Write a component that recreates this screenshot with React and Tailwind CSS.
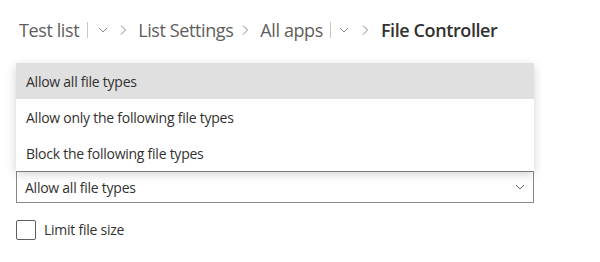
import React from "react";

const Chevron = ({ className }) => (
  <svg viewBox="0 0 12 12" className={className} fill="none" stroke="currentColor" strokeWidth="1">
    <path d="M2 4 L6 8 L10 4" />
  </svg>
);
const Right = ({ className }) => (
  <svg viewBox="0 0 12 12" className={className} fill="none" stroke="currentColor" strokeWidth="1">
    <path d="M4 1.5 L8.5 6 L4 10.5" />
  </svg>
);

export default function App() {
  return (
    <div className="w-[600px] h-[262px] bg-white px-4 text-[#323130]" style={{ fontFamily: '"Open Sans", "Noto Sans", sans-serif' }}>
      <div className="h-[46px] pt-[14px] flex items-center text-[18px] tracking-[-0.4px] text-[#605e5c] pl-[3px]">
        <span>Test list</span>
        <span className="ml-[8px] w-px h-[16px] bg-[#c8c6c4]" />
        <Chevron className="ml-[9px] w-[12px] h-[12px] text-[#8a8886]" />
        <Right className="ml-[8px] w-[12px] h-[12px] text-[#8a8886]" />
        <span className="ml-[9px]">List Settings</span>
        <Right className="ml-[6px] w-[12px] h-[12px] text-[#8a8886]" />
        <span className="ml-[9px]">All apps</span>
        <span className="ml-[7px] w-px h-[16px] bg-[#c8c6c4]" />
        <Chevron className="ml-[7px] w-[12px] h-[12px] text-[#8a8886]" />
        <Right className="ml-[9px] w-[12px] h-[12px] text-[#8a8886]" />
        <span className="ml-[10px] font-semibold text-[#323130]">File Controller</span>
      </div>
      <div className="relative mt-[125px] w-[518px]">
        <div className="absolute bottom-full left-0 w-full bg-white shadow-[0_3px_10px_rgba(0,0,0,0.18)] text-[14px] tracking-[-0.25px]">
          <div className="h-[36px] flex items-center px-[10px] bg-[#e0e0e0]">Allow all file types</div>
          <div className="h-[36px] flex items-center px-[10px]">Allow only the following file types</div>
          <div className="h-[36px] flex items-center px-[10px]">Block the following file types</div>
        </div>
        <div className="h-[32px] border border-[#8a8886] flex items-center justify-between pl-[8px] pr-[7px] text-[14px] tracking-[-0.25px]">
          <span>Allow all file types</span>
          <Chevron className="w-[12px] h-[12px] text-[#605e5c]" />
        </div>
      </div>
      <div className="mt-[16px] flex items-center">
        <span className="w-[20px] h-[20px] border border-[#605e5c] rounded-[2px]" />
        <span className="ml-[8px] text-[14px] tracking-[-0.25px]">Limit file size</span>
      </div>
    </div>
  );
}
